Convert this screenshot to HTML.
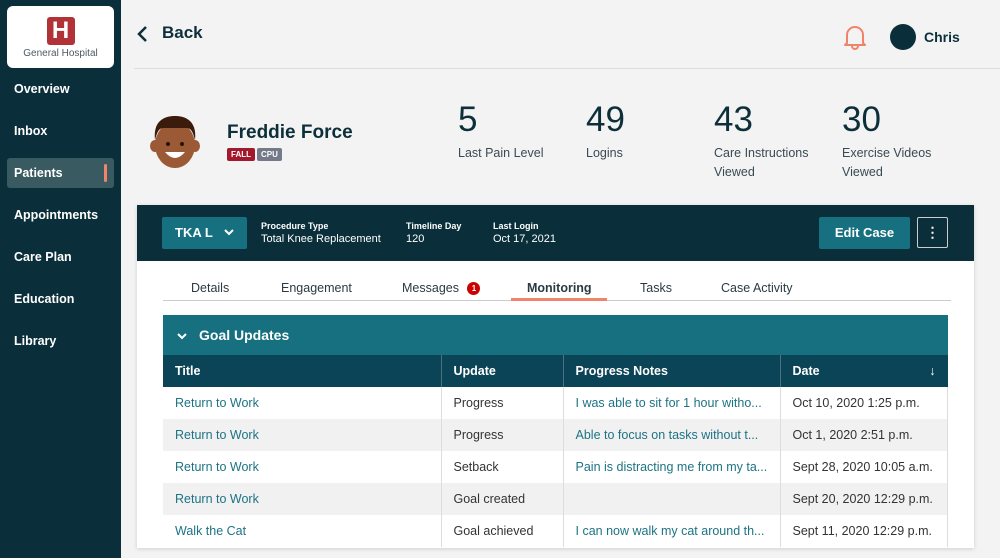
<!DOCTYPE html>
<html><head><meta charset="utf-8"><style>
*{margin:0;padding:0;box-sizing:border-box}
body{width:1000px;height:558px;overflow:hidden;background:#f3f3f3;font-family:"Liberation Sans",sans-serif;position:relative;color:#0d2f3a}
.side{position:absolute;left:0;top:0;width:121px;height:558px;background:#0b2f3a}
.logo{position:absolute;left:7px;top:6px;width:107px;height:62px;background:#fff;border-radius:6px;text-align:center}
.logo .h{width:28px;height:28px;background:#b13237;border-radius:3px;margin:11px auto 0;color:#fff;font-weight:bold;font-size:24px;line-height:28px}
.logo .t{font-size:10px;color:#4d5a63;margin-top:3px}
.nav{position:absolute;left:14px;color:#fff;font-size:12.5px;font-weight:bold}
.act{position:absolute;left:7px;top:158px;width:107px;height:30px;background:#3a5a62;border-radius:3px}
.act i{position:absolute;right:7px;top:6px;width:3px;height:18px;background:#f0846b;border-radius:2px}
.abs{position:absolute}
.stat .n{font-size:35px;color:#0d2f3a;line-height:40px}
.stat .l{font-size:12.5px;color:#3a4a52;line-height:19px;margin-top:4px}
.card{position:absolute;left:137px;top:205px;width:837px;height:343px;background:#fff;box-shadow:0 1px 4px rgba(0,0,0,.15)}
.ch{position:absolute;left:0;top:0;width:837px;height:56px;background:#0a2f3a}
.tab{position:absolute;top:281px;font-size:12.5px;color:#2b3a42}
table{border-collapse:collapse;font-size:12.5px;position:absolute;left:163px;top:355px;width:785px;table-layout:fixed}
th{background:#0b4457;color:#fff;text-align:left;font-weight:bold;height:32px;padding-left:12px;border-right:1px solid #4a7280}
td{height:32px;padding-left:12px;border-right:1px solid #ddd;color:#333;white-space:nowrap;overflow:hidden}
tr:nth-child(odd) td{background:#f1f1f1}
td.a{color:#1d7384}
</style></head><body>
<div class="side">
<div class="logo"><div class="h">H</div><div class="t">General Hospital</div></div>
<div class="nav" style="top:82px">Overview</div>
<div class="nav" style="top:124px">Inbox</div>
<div class="act"><i></i></div>
<div class="nav" style="top:166px">Patients</div>
<div class="nav" style="top:208px">Appointments</div>
<div class="nav" style="top:250px">Care Plan</div>
<div class="nav" style="top:292px">Education</div>
<div class="nav" style="top:334px">Library</div>
</div>
<div class="abs" style="left:134px;top:68px;width:866px;height:1px;background:#ddd"></div>
<svg class="abs" style="left:136px;top:25px" width="14" height="18"><path d="M10 2L3 9L10 16" stroke="#0d2f3a" stroke-width="2.5" fill="none"/></svg>
<div class="abs" style="left:162px;top:23px;font-size:17px;font-weight:bold">Back</div>
<svg class="abs" style="left:842px;top:23px" width="26" height="28"><path d="M5 20V12a8 8 0 0116 0v8l2 2H3z M10 23a3 3 0 006 0" stroke="#f0846b" stroke-width="2" fill="none" stroke-linejoin="round"/></svg>
<div class="abs" style="left:890px;top:24px;width:26px;height:26px;border-radius:50%;background:#0a2f3a"></div>
<div class="abs" style="left:924px;top:29px;font-size:14px;font-weight:bold">Chris</div>
<svg class="abs" style="left:149px;top:114px" width="52" height="56"><ellipse cx="6" cy="32" rx="5" ry="6" fill="#9b5a35"/><ellipse cx="46" cy="32" rx="5" ry="6" fill="#9b5a35"/><ellipse cx="26" cy="31" rx="20" ry="23" fill="#9b5a35"/><path d="M6 26C4 8 14 2 26 2s22 6 20 24c-2-8-4-12-8-12H14c-4 0-6 4-8 12z" fill="#3b1b0c"/><circle cx="19" cy="30" r="2" fill="#2a1208"/><circle cx="33" cy="30" r="2" fill="#2a1208"/><path d="M16 38q10 12 20 0z" fill="#fff"/></svg>
<div class="abs" style="left:227px;top:122px;font-size:19px;font-weight:bold">Freddie Force</div>
<div class="abs" style="left:227px;top:148px;background:#a3192c;color:#fff;font-size:8px;font-weight:bold;padding:2px 4px;border-radius:2px">FALL</div>
<div class="abs" style="left:257px;top:148px;background:#747a8a;color:#fff;font-size:8px;font-weight:bold;padding:2px 4px;border-radius:2px">CPU</div>
<div class="abs stat" style="left:458px;top:100px"><div class="n">5</div><div class="l">Last Pain Level</div></div>
<div class="abs stat" style="left:586px;top:100px"><div class="n">49</div><div class="l">Logins</div></div>
<div class="abs stat" style="left:714px;top:100px"><div class="n">43</div><div class="l">Care Instructions<br>Viewed</div></div>
<div class="abs stat" style="left:842px;top:100px"><div class="n">30</div><div class="l">Exercise Videos<br>Viewed</div></div>
<div class="card"><div class="ch">
<div class="abs" style="left:25px;top:12px;width:85px;height:32px;background:#16707f;border-radius:2px;color:#fff;font-weight:bold;font-size:13px;padding:8px 0 0 13px">TKA L<svg style="position:absolute;left:62px;top:12px" width="10" height="7"><path d="M1 1l4 4 4-4" stroke="#fff" stroke-width="2" fill="none"/></svg></div>
<div class="abs" style="left:124px;top:16px;color:#fff;font-size:9px;font-weight:bold">Procedure Type<div style="font-weight:normal;font-size:11px;margin-top:2px">Total Knee Replacement</div></div>
<div class="abs" style="left:269px;top:16px;color:#fff;font-size:9px;font-weight:bold">Timeline Day<div style="font-weight:normal;font-size:11px;margin-top:2px">120</div></div>
<div class="abs" style="left:356px;top:16px;color:#fff;font-size:9px;font-weight:bold">Last Login<div style="font-weight:normal;font-size:11px;margin-top:2px">Oct 17, 2021</div></div>
<div class="abs" style="left:682px;top:12px;width:91px;height:32px;background:#16707f;border-radius:2px;color:#fff;font-weight:bold;font-size:13px;text-align:center;line-height:32px">Edit Case</div>
<div class="abs" style="left:780px;top:12px;width:31px;height:31px;border:1px solid #ccc;border-radius:2px;color:#fff;text-align:center;font-weight:bold;font-size:14px;line-height:29px">⋮</div>
</div></div>
<div class="tab" style="left:191px">Details</div>
<div class="tab" style="left:281px">Engagement</div>
<div class="tab" style="left:402px">Messages <span style="display:inline-block;width:13px;height:13px;border-radius:50%;background:#c00;color:#fff;font-size:8px;font-weight:bold;text-align:center;line-height:13px;margin-left:5px;vertical-align:1px">1</span></div>
<div class="tab" style="left:527px;font-weight:bold">Monitoring</div>
<div class="tab" style="left:640px">Tasks</div>
<div class="tab" style="left:721px">Case Activity</div>
<div class="abs" style="left:163px;top:300px;width:788px;height:1px;background:#ccc"></div>
<div class="abs" style="left:511px;top:298px;width:96px;height:3px;background:#f0846b"></div>
<div class="abs" style="left:163px;top:315px;width:785px;height:40px;background:#16707f;color:#fff;font-weight:bold;font-size:14px;padding:12px 0 0 36px">Goal Updates<svg style="position:absolute;left:14px;top:18px" width="10" height="7"><path d="M1 1l4 4 4-4" stroke="#fff" stroke-width="2" fill="none"/></svg></div>
<table>
<colgroup><col style="width:278px"><col style="width:122px"><col style="width:217px"><col></colgroup>
<tr><th>Title</th><th>Update</th><th>Progress Notes</th><th style="border:none">Date <span style="float:right;margin-right:12px">↓</span></th></tr>
<tr><td class="a">Return to Work</td><td>Progress</td><td class="a">I was able to sit for 1 hour witho...</td><td>Oct 10, 2020 1:25 p.m.</td></tr>
<tr><td class="a">Return to Work</td><td>Progress</td><td class="a">Able to focus on tasks without t...</td><td>Oct 1, 2020 2:51 p.m.</td></tr>
<tr><td class="a">Return to Work</td><td>Setback</td><td class="a">Pain is distracting me from my ta...</td><td>Sept 28, 2020 10:05 a.m.</td></tr>
<tr><td class="a">Return to Work</td><td>Goal created</td><td></td><td>Sept 20, 2020 12:29 p.m.</td></tr>
<tr><td class="a">Walk the Cat</td><td>Goal achieved</td><td class="a">I can now walk my cat around th...</td><td>Sept 11, 2020 12:29 p.m.</td></tr>
</table>
</body></html>
